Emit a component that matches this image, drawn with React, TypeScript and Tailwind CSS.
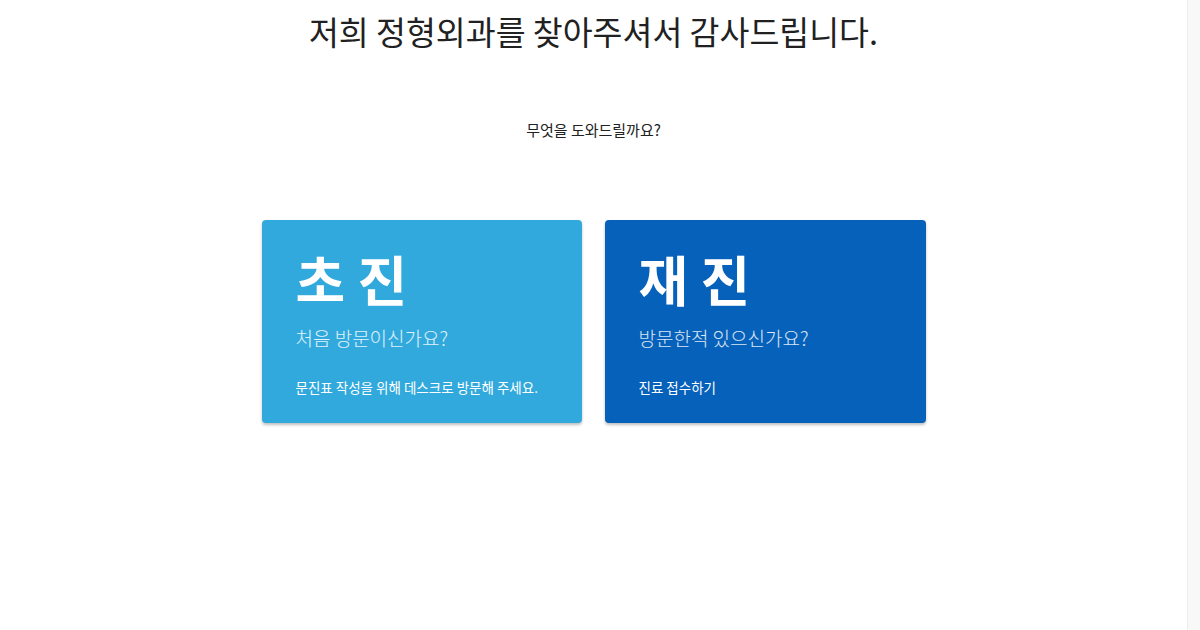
export default function App() {
  return (
    <div className="flex h-[630px] w-[1200px] bg-white font-['Noto_Sans_CJK_KR','Noto_Sans',sans-serif] text-[#212121]">
      <main className="flex flex-1 flex-col items-center pt-[7px]">
        <h1 className="text-[32.5px] leading-[48px] font-normal">저희 정형외과를 찾아주셔서 감사드립니다.</h1>
        <p className="mt-[65px] text-[15px] leading-[20px]">무엇을 도와드릴까요?</p>

        <div className="mt-[80px] flex gap-[23px]">
          <div className="flex h-[203px] w-[320px] flex-col rounded-[4px] bg-[#31a9dc] px-[34px] pt-[24px] text-white shadow-[0_2px_3px_rgba(0,0,0,0.25)]">
            <h2 className="text-[54px] leading-[70px] font-bold">초 진</h2>
            <p className="mt-[11px] text-[19px] leading-[26px] font-light text-white/85">처음 방문이신가요?</p>
            <p className="mt-[27px] text-[13.5px] leading-[18px]">문진표 작성을 위해 데스크로 방문해 주세요.</p>
          </div>
          <div className="flex h-[203px] w-[321px] flex-col rounded-[4px] bg-[#0561b9] px-[34px] pt-[24px] text-white shadow-[0_2px_3px_rgba(0,0,0,0.25)]">
            <h2 className="text-[54px] leading-[70px] font-bold">재 진</h2>
            <p className="mt-[11px] text-[19px] leading-[26px] font-light text-white/85">방문한적 있으신가요?</p>
            <p className="mt-[27px] text-[13.5px] leading-[18px]">진료 접수하기</p>
          </div>
        </div>
      </main>
      <div className="w-[13px] border-l border-[#ececec] bg-[#f8f8f8]" />
    </div>
  );
}
